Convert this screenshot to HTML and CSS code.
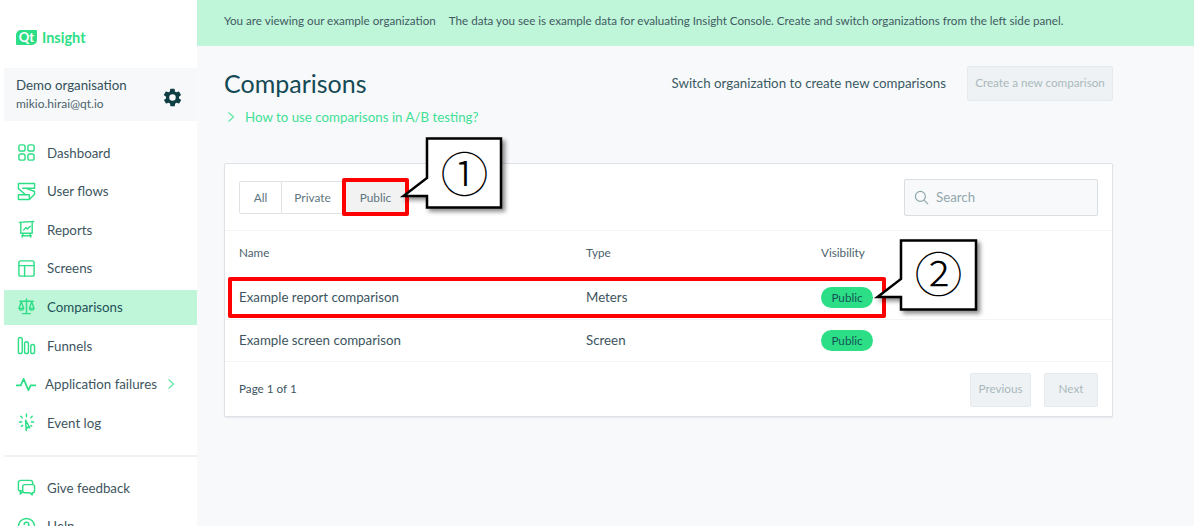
FILE: index.html
```html
<!DOCTYPE html>
<html lang="en">
<head>
<meta charset="utf-8">
<title>Comparisons</title>
<link rel="stylesheet" href="styles.css">
</head>
<body>
<div class="app">
  <aside class="sidebar">
    <div class="logo"><span class="logo-mark">Qt</span><span class="logo-text">Insight</span></div>
    <div class="org">
      <div class="org-text">
        <div class="org-name">Demo organisation</div>
        <div class="org-mail">mikio.hirai@qt.io</div>
      </div>
      <svg class="gear" viewBox="0 0 24 24"><path fill="#0f3f45" d="M19.400 13a7.500 7.500 0 0 0 0-2l2.100-1.600a.5.500 0 0 0 .1-.6l-2-3.500a.5.500 0 0 0-.6-.2l-2.500 1a7.300 7.300 0 0 0-1.700-1l-.4-2.700a.5.500 0 0 0-.5-.4h-4a.5.500 0 0 0-.5.4l-.4 2.700a7.300 7.300 0 0 0-1.700 1l-2.500-1a.5.500 0 0 0-.6.2l-2 3.500a.5.500 0 0 0 .1.6L4.600 11a7.500 7.500 0 0 0 0 2l-2.100 1.600a.5.500 0 0 0-.1.6l2 3.500c.1.200.4.300.6.200l2.500-1c.5.400 1.100.7 1.700 1l.4 2.700c0 .2.200.4.500.4h4c.3 0 .5-.2.500-.4l.4-2.700c.6-.3 1.200-.6 1.700-1l2.500 1c.2.100.5 0 .6-.2l2-3.500a.5.500 0 0 0-.1-.6zM12 15.700a3.700 3.700 0 1 1 0-7.400 3.700 3.700 0 0 1 0 7.400z"/></svg>
    </div>
    <nav class="nav">
      <a class="nav-item"><svg class="ico" viewBox="0 0 20 20"><rect x="2" y="2" width="6.500" height="6.500" rx="2"/><rect x="11.500" y="2" width="6.500" height="6.500" rx="2"/><rect x="2" y="11.500" width="6.500" height="6.500" rx="2"/><rect x="11.500" y="11.500" width="6.500" height="6.500" rx="2"/></svg>Dashboard</a>
      <a class="nav-item"><svg class="ico" viewBox="0 0 20 20"><path d="M1.500 1.500H18.500V6.500H9L18.500 10V13L13 18.500H1.500V13.500H9L1.500 7ZM14 6.500L6 6.500M13 18.500V13.500H9"/></svg>User flows</a>
      <a class="nav-item"><svg class="ico" viewBox="0 0 20 20"><path d="M2.500 2.500L17.500 1.500M4 3v11h12V2M6.500 14l-1 4M13.500 14l1 4M5 16.500h10M7 10.500l2.500-2.500 1.500 1.500 3-3"/></svg>Reports</a>
      <a class="nav-item"><svg class="ico" viewBox="0 0 20 20"><rect x="2" y="2" width="16" height="16" rx="2"/><path d="M2 7h16M8 7v11"/></svg>Screens</a>
      <a class="nav-item is-active"><svg class="ico" viewBox="0 0 20 20"><path d="M10 2v15M6 17.500h8M3 4.500h14M4.500 5L2 12h5zM15.500 5L13 12h5zM2 12c.5 2.500 4.500 2.500 5 0M13 12c.5 2.500 4.500 2.500 5 0"/></svg>Comparisons</a>
      <a class="nav-item"><svg class="ico" viewBox="0 0 20 20"><rect x="1.500" y="1.500" width="4" height="17" rx="2"/><rect x="8" y="6" width="4" height="12.500" rx="2"/><rect x="14.500" y="9" width="4" height="9.500" rx="2"/></svg>Funnels</a>
      <a class="nav-item nav-item-sub"><svg class="ico ico-wide" viewBox="0 0 20 20"><path stroke-width="1.800" d="M0 11h4.500L7.500 4l5 12 2.500-5h5"/></svg>Application failures<svg class="chev" viewBox="0 0 8 12"><path d="M1.500 1.500L6.500 6l-5 4.500"/></svg></a>
      <a class="nav-item"><svg class="ico" viewBox="0 0 20 20"><path d="M10 1v3M4 3.500L5.500 5M16 3.500L14.500 5M2.500 9.500h2.500M15 9.500h2.500M4.500 14l1.500-1M15.500 14l-1-.8M9 7.500l4.500 8-3-.500-.800 3.500z"/></svg>Event log</a>
    </nav>
    <div class="nav-divider"></div>
    <nav class="nav nav-lower">
      <a class="nav-item"><svg class="ico" viewBox="0 0 20 20"><path d="M5 13.500H3.500A2 2 0 0 1 1.500 11.500V5a2.500 2.500 0 0 1 2.500-2.500h10A2.500 2.500 0 0 1 16.500 5v1.500M8 7h8.500a2 2 0 0 1 2 2v4.500a2 2 0 0 1-2 2h-.5v2.500l-2.500-2.500H8a2 2 0 0 1-2-2V9a2 2 0 0 1 2-2zM3.500 13.500V17L6 14.500"/></svg>Give feedback</a>
      <a class="nav-item"><svg class="ico" viewBox="0 0 20 20"><circle cx="10" cy="10" r="8.500"/><path d="M7.500 8a2.500 2.500 0 1 1 3.500 2.300c-.7.300-1 .7-1 1.700M10 14.500v.5"/></svg>Help</a>
    </nav>
  </aside>

  <main class="main">
    <div class="banner">
      <span>You are viewing our example organization</span>
      <span>The data you see is example data for evaluating Insight Console. Create and switch organizations from the left side panel.</span>
    </div>
    <div class="content">
      <header class="page-head">
        <div class="page-title">
          <h1>Comparisons</h1>
          <a class="help-link"><svg class="chev" viewBox="0 0 8 12"><path d="M1.500 1.500L6.500 6l-5 4.500"/></svg>How to use comparisons in A/B testing?</a>
        </div>
        <div class="page-actions">
          <span class="hint">Switch organization to create new comparisons</span>
          <button class="btn btn-create">Create a new comparison</button>
        </div>
      </header>

      <section class="card">
        <div class="toolbar">
          <div class="segments">
            <button class="seg seg-all">All</button>
            <button class="seg seg-private">Private</button>
            <button class="seg seg-public">Public</button>
          </div>
          <div class="search">
            <svg class="search-ico" viewBox="0 0 16 16"><circle cx="6.800" cy="6.800" r="5.300"/><path d="M10.800 10.800L15 15"/></svg>
            <span>Search</span>
          </div>
        </div>
        <div class="row row-head"><span class="c1">Name</span><span class="c2">Type</span><span class="c3">Visibility</span></div>
        <div class="row row-one"><span class="c1">Example report comparison</span><span class="c2">Meters</span><span class="c3"><span class="pill">Public</span></span></div>
        <div class="row row-two"><span class="c1">Example screen comparison</span><span class="c2">Screen</span><span class="c3"><span class="pill">Public</span></span></div>
        <div class="card-foot">
          <span class="page-count">Page 1 of 1</span>
          <div class="pager">
            <button class="btn btn-prev">Previous</button>
            <button class="btn btn-next">Next</button>
          </div>
        </div>
      </section>
    </div>
  </main>
</div>

<div class="mark mark-one"></div>
<div class="mark mark-two"></div>
<div class="callout callout-one">
  <svg viewBox="0 0 110 86"><path class="callout-shape" d="M1.500 59L25 41V1.500h74v69H25V59z"/></svg>
  <span>①</span>
</div>
<div class="callout callout-two">
  <svg viewBox="0 0 110 86"><path class="callout-shape" d="M1.500 58L25 40V1.500h75v69H25V58z"/></svg>
  <span>②</span>
</div>
</body>
</html>
```

FILE: styles.css
```css
* { box-sizing: border-box; }
html, body { margin: 0; height: 526px; overflow: hidden; }
body {
  position: relative;
  font-family: "Lato", "Open Sans", sans-serif;
  font-size: 13.300px;
  color: #3d5560;
  background: #f8f9fb;
}
.app { display: flex; height: 526px; overflow: hidden; }

.sidebar {
  flex: 0 0 197px;
  background: #fff;
  padding: 28px 0 0 4px;
  display: flex;
  flex-direction: column;
}
.sidebar > * { flex: none; }
.logo { display: flex; align-items: center; gap: 5px; margin-left: 12px; height: 18px; }
.logo-mark {
  background: #2cde85;
  color: #fff;
  font-weight: 700;
  font-size: 13px;
  line-height: 15px;
  width: 21px;
  text-align: center;
  border-radius: 5px 1px 5px 1px;
}
.logo-text { color: #2cde85; font-size: 14.500px; font-weight: 700; }

.org {
  margin-top: 22px;
  height: 53px;
  background: #f6f8f9;
  padding: 8px 14px 0 12px;
  display: flex;
  justify-content: space-between;
  align-items: center;
}
.org-text { align-self: flex-start; }
.org-name { font-size: 13.300px; line-height: 18px; color: #33505c; }
.org-mail { font-size: 12px; line-height: 20px; color: #4b626c; }
.gear { width: 21px; height: 21px; margin-top: -3px; }

.nav { display: flex; flex-direction: column; gap: 3.600px; }
.sidebar > .nav { margin-top: 14.600px; }
.sidebar > .nav-lower { margin-top: 13.600px; }
.nav-item {
  height: 35px;
  flex: none;
  display: flex;
  align-items: center;
  padding: 0 0 1px 13px;
  color: #3d5560;
  font-size: 13.300px;
}
.nav-item.is-active { background: #bff5d8; color: #23525a; }
.nav-item-sub { padding-left: 12px; }
.ico {
  width: 19px;
  height: 19px;
  margin-right: 11px;
  flex: none;
  fill: none;
  stroke: #2cde85;
  stroke-width: 1.500;
  stroke-linejoin: round;
  stroke-linecap: round;
}
.ico-wide { width: 20px; margin-right: 9px; }
.chev { width: 8px; height: 12px; fill: none; stroke: #5fe6a3; stroke-width: 1.200; flex: none; }
.nav-item .chev { margin-left: 10px; }
.nav-divider { height: 2px; background: #f1f2f4; margin-top: 14.400px; }

.main { flex: 1; min-width: 0; display: flex; flex-direction: column; }
.banner {
  height: 46px;
  flex: none;
  background: #bff5d8;
  padding: 0 27px 5px;
  display: flex;
  align-items: center;
  gap: 13px;
  font-size: 11.650px;
  color: #3f5b63;
  white-space: nowrap;
  overflow: hidden;
}
.content { padding: 0 81px 0 27px; }

.page-head { height: 117px; display: flex; justify-content: space-between; }
.page-title { padding-top: 20px; }
.page-title h1 {
  margin: 0;
  font-size: 25px;
  font-weight: 400;
  line-height: 34px;
  color: #144a55;
}
.help-link {
  margin-top: 8px;
  display: flex;
  align-items: center;
  gap: 10px;
  padding-left: 3px;
  color: #3fe095;
  font-size: 13.300px;
  line-height: 18px;
}
.page-actions { display: flex; gap: 21px; align-items: center; height: 35px; margin-top: 20px; }
.hint { color: #3a5a63; font-size: 13.300px; padding-bottom: 2px; }

.btn {
  font: inherit;
  font-size: 11.700px;
  color: #a9b9bd;
  background: #eff2f4;
  border: 1px solid #e6eaed;
  border-radius: 2px;
  padding: 0 0 4px;
}
.btn-create { width: 146px; height: 35px; }
.btn-prev { width: 61px; height: 34px; }
.btn-next { width: 54px; height: 34px; }

.card {
  height: 254px;
  background: #fff;
  border: 1px solid #dfe2e7;
  border-radius: 2px;
  box-shadow: 0 1px 1px #e3e6ea;
}
.toolbar {
  height: 67px;
  padding: 15px 14px 0 14px;
  border-bottom: 1px solid #f3f4f6;
  display: flex;
  justify-content: space-between;
}
.segments { display: flex; height: 33px; margin-top: 2px; }
.seg {
  font: inherit;
  font-size: 11.800px;
  color: #5d767e;
  background: #fff;
  border: 1px solid #dfe3e6;
  border-left-width: 0;
  padding: 0 0 1px;
}
.seg-all { width: 43px; border-left-width: 1px; border-radius: 2px 0 0 2px; }
.seg-private { width: 62px; }
.seg-public { width: 64px; background: #f2f2f2; }
.search {
  width: 194px;
  height: 37px;
  background: #f8f9fb;
  border: 1px solid #d9dee2;
  border-radius: 2px;
  display: flex;
  align-items: center;
  padding: 0 0 1px 9px;
  gap: 7px;
  color: #93a8ae;
  font-size: 13.300px;
}
.search-ico { width: 15px; height: 15px; fill: none; stroke: #8ca5aa; stroke-width: 1.200; }

.row {
  display: grid;
  grid-template-columns: 347px 235px 1fr;
  align-items: center;
  padding-left: 14px;
  color: #3d5560;
}
.row-head { height: 44px; font-size: 11.700px; color: #4a626c; padding-bottom: 2px; }
.row-one { height: 44px; }
.row-two { height: 42px; border-top: 1px solid #f3f4f6; padding-bottom: 1px; }
.pill {
  display: block;
  width: 52px;
  height: 21px;
  line-height: 20px;
  text-align: center;
  background: #2cde85;
  border-radius: 11px;
  color: #14555a;
  font-size: 11.700px;
}
.card-foot {
  height: 56px;
  border-top: 1px solid #f3f4f6;
  padding: 0 14px;
  display: flex;
  justify-content: space-between;
  align-items: center;
  font-size: 11.700px;
}
.page-count { padding-bottom: 3px; }
.pager { display: flex; gap: 13px; }

/* Annotations drawn over the screenshot */
.mark { position: absolute; border: 4px solid #f00; border-radius: 2px; }
.mark-one { left: 342px; top: 178px; width: 67px; height: 38px; }
.mark-two { left: 228px; top: 277px; width: 658px; height: 41px; }
.callout { position: absolute; width: 110px; height: 86px; }
.callout svg { display: block; width: 110px; height: 86px; overflow: visible; filter: drop-shadow(3px 3px 2px rgba(0,0,0,.45)); }
.callout-shape { fill: #fff; stroke: #000; stroke-width: 2.500; }
.callout span {
  position: absolute;
  left: 25px;
  top: 0;
  width: 75px;
  display: flex;
  align-items: center;
  justify-content: center;
  font-family: "Noto Sans CJK JP", sans-serif;
  font-weight: 300;
  font-size: 48px;
  line-height: 1;
  color: #000;
}
.callout-one { left: 402px; top: 137px; }
.callout-one span { height: 68px; }
.callout-two { left: 876px; top: 239px; }
.callout-two span { height: 64px; }
```
